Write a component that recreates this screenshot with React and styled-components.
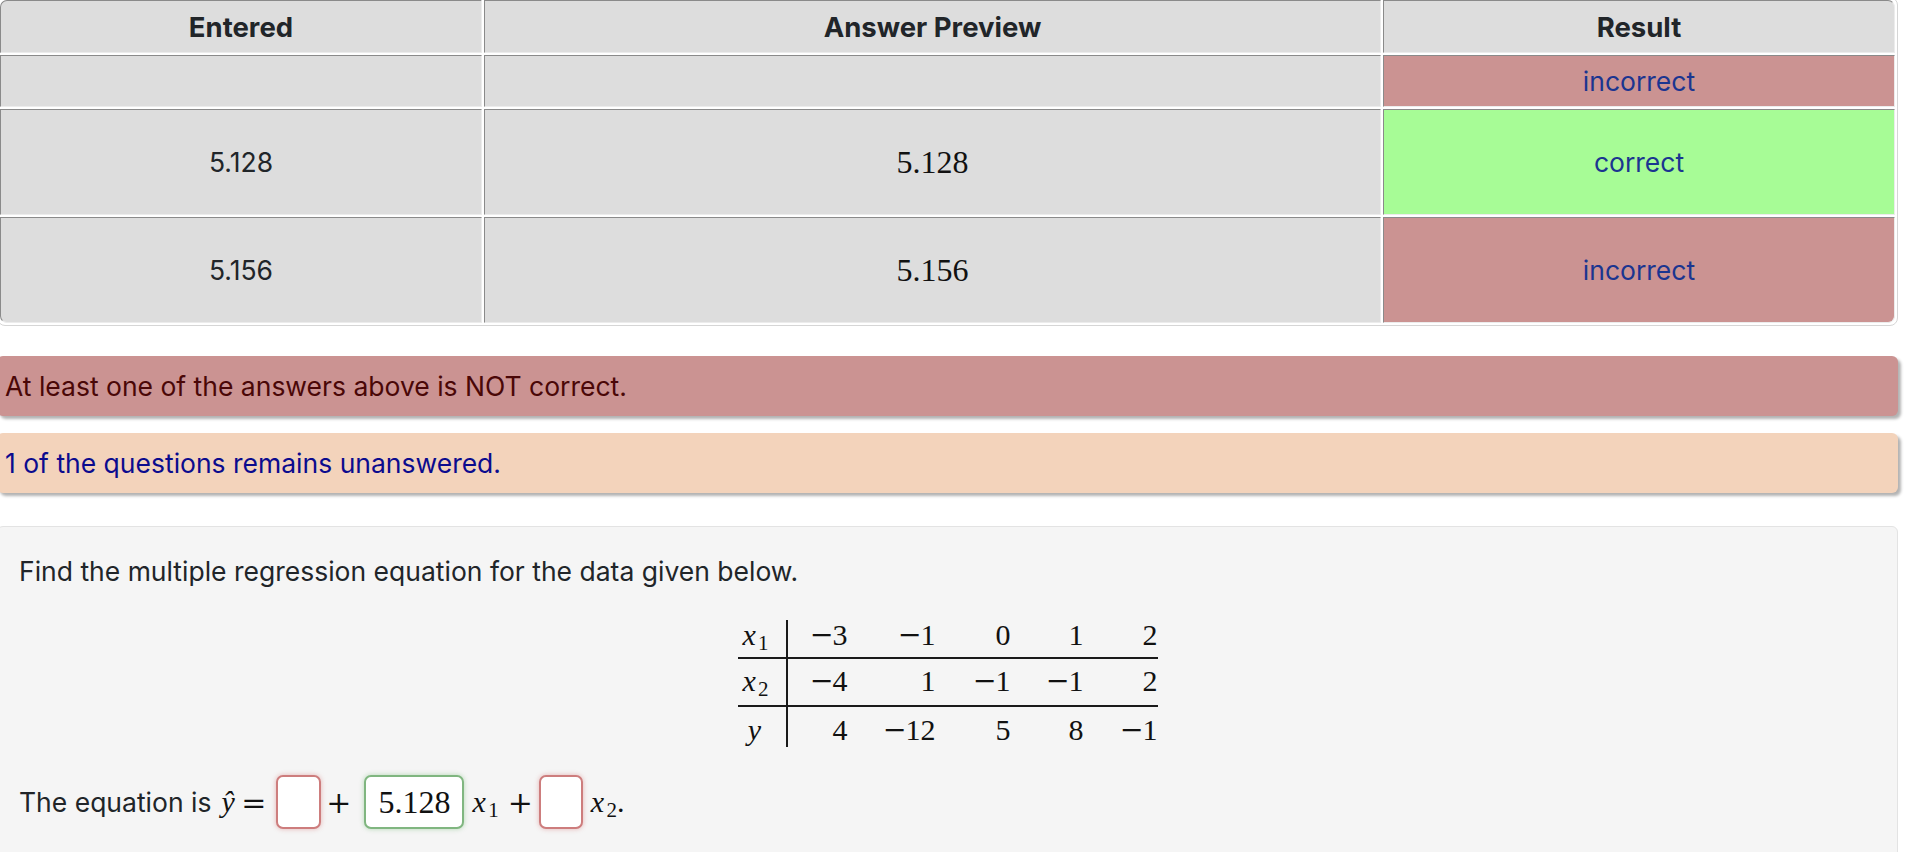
import React from 'react';
import styled, { createGlobalStyle } from 'styled-components';

const GlobalStyle = createGlobalStyle`
  html, body {
    margin: 0;
    padding: 0;
    background: #fff;
  }
  body {
    font-family: Inter, "Liberation Sans", Arial, sans-serif;
    font-size: 26.5px;
    color: #212529;
    overflow: hidden;
  }
`;

const serif = `"Liberation Serif", "Times New Roman", serif`;

const Page = styled.div`
  width: 1901px;
  margin: -3px 0 0 -3px;
`;

const ResultsTable = styled.table`
  width: 1901px;
  table-layout: fixed;
  border-collapse: separate;
  border-spacing: 2px;
  border: 1px solid #d6d6d6;
  border-radius: 8px;
  background: #fff;
`;

const Col = styled.col`
  width: ${({ $w }) => $w}px;
`;

const cellBase = `
  box-sizing: border-box;
  padding: 0;
  border-style: solid;
  border-width: 1px;
  border-color: #8a8a8a #ececec #ececec #8a8a8a;
  background: #dddddd;
  text-align: center;
  vertical-align: middle;
`;

const HeadCell = styled.th`
  ${cellBase}
  height: 53px;
  font-size: 27.5px;
  font-weight: 700;
  color: #212529;
  &:first-child { border-top-left-radius: 7px; }
  &:last-child { border-top-right-radius: 7px; }
`;

const statusBg = {
  correct: '#a7fc96',
  incorrect: '#cb9392',
};

const Cell = styled.td`
  ${cellBase}
  height: ${({ $h }) => $h}px;
  ${({ $status }) => $status && `background: ${statusBg[$status]}; color: #1b3590;`}
  ${({ $math }) => $math && `font-family: ${serif}; font-size: 32px; color: #111;`}
  tr:last-child > &:first-child { border-bottom-left-radius: 7px; }
  tr:last-child > &:last-child { border-bottom-right-radius: 7px; }
`;

const Alert = styled.div`
  box-sizing: border-box;
  margin-top: ${({ $gap }) => $gap}px;
  height: 60px;
  display: flex;
  align-items: center;
  padding: 0 8px;
  border-radius: 6px;
  box-shadow: 3px 3px 3px rgba(0, 0, 0, 0.3);
  background: ${({ $tone }) => ($tone === 'danger' ? '#cb9392' : '#f3d3bb')};
  color: ${({ $tone }) => ($tone === 'danger' ? '#4a0707' : '#0b0b8e')};
`;

const ProblemBox = styled.div`
  margin-top: 33px;
  min-height: 420px;
  background: #f5f5f5;
  border: 1px solid #e3e3e3;
  border-radius: 6px;
  padding: 26px 21px 40px 21px;
`;

const Text = styled.div`
  line-height: 36px;
`;

const MathCenter = styled.div`
  display: flex;
  justify-content: center;
  margin-top: 31px;
`;

const MathTable = styled.div`
  width: 420px;
  font-family: ${serif};
  font-size: 30px;
  color: #111;
`;

const MathRow = styled.div`
  display: grid;
  grid-template-columns: 50px 60px 88px 75px 73px 74px;
  height: ${({ $h }) => $h}px;
  ${({ $rule }) => $rule && 'border-bottom: 2px solid #1a1a1a;'}
  box-sizing: border-box;
`;

const MathCell = styled.div`
  display: flex;
  align-items: flex-end;
  justify-content: flex-end;
  padding-bottom: ${({ $pb }) => $pb}px;
  line-height: 30px;
  white-space: nowrap;
`;

const LabelCell = styled(MathCell)`
  justify-content: center;
  padding-right: 12px;
  border-right: 2px solid #1a1a1a;
`;

const Var = styled.span`
  font-style: italic;
  letter-spacing: 0.08em;
`;

const Sub = styled.sub`
  font-style: normal;
  font-size: 0.7em;
  vertical-align: -0.25em;
  line-height: 0;
  letter-spacing: 0;
`;

const Minus = styled.span`
  display: inline-block;
  width: 0.8em;
  font-family: "DejaVu Serif", ${serif};
  font-size: 0.95em;
  text-align: left;
`;

const EqLine = styled.div`
  display: flex;
  align-items: center;
  height: 54px;
  margin-top: 28px;
`;

const MathInline = styled.span`
  font-family: ${({ $op }) => ($op ? `"DejaVu Serif", ${serif}` : serif)};
  font-size: 30px;
  color: #111;
  margin: 0 ${({ $mr }) => $mr || 0}px 0 ${({ $ml }) => $ml || 0}px;
  white-space: nowrap;
`;

const boxColors = {
  bad: { border: '#cd7d7d', glow: 'rgba(200, 60, 60, 0.35)' },
  good: { border: '#80b680', glow: 'rgba(60, 160, 60, 0.35)' },
};

const AnswerBox = styled.span`
  box-sizing: border-box;
  display: inline-flex;
  align-items: center;
  justify-content: center;
  width: ${({ $w }) => $w}px;
  height: 54px;
  background: #fff;
  border: 2px solid ${({ $state }) => boxColors[$state].border};
  border-radius: 7px;
  box-shadow: 0 0 5px ${({ $state }) => boxColors[$state].glow};
  font-family: ${serif};
  font-size: 32px;
  color: #111;
`;

const neg = (n) => (
  <>
    <Minus>−</Minus>
    {n}
  </>
);

const rows = [
  { label: <Var>x<Sub>1</Sub></Var>, vals: [neg(3), neg(1), '0', '1', '2'], h: 39, pb: 9, rule: true },
  { label: <Var>x<Sub>2</Sub></Var>, vals: [neg(4), '1', neg(1), neg(1), '2'], h: 48, pb: 9, rule: true },
  { label: <Var>y</Var>, vals: ['4', neg(12), '5', '8', neg(1)], h: 40, pb: 2, rule: false },
];

const attempts = [
  { entered: '', preview: '', status: 'incorrect', h: 52 },
  { entered: '5.128', preview: '5.128', status: 'correct', h: 106 },
  { entered: '5.156', preview: '5.156', status: 'incorrect', h: 106 },
];

export default function App() {
  return (
    <>
      <GlobalStyle />
      <Page>
        <ResultsTable>
          <colgroup>
            <Col $w={482} />
            <Col $w={897} />
            <Col $w={512} />
          </colgroup>
          <thead>
            <tr>
              <HeadCell>Entered</HeadCell>
              <HeadCell>Answer Preview</HeadCell>
              <HeadCell>Result</HeadCell>
            </tr>
          </thead>
          <tbody>
            {attempts.map((a, i) => (
              <tr key={i}>
                <Cell $h={a.h}>{a.entered}</Cell>
                <Cell $h={a.h} $math>{a.preview}</Cell>
                <Cell $h={a.h} $status={a.status}>{a.status}</Cell>
              </tr>
            ))}
          </tbody>
        </ResultsTable>

        <Alert $tone="danger" $gap={30}>At least one of the answers above is NOT correct.</Alert>
        <Alert $tone="warning" $gap={17}>1 of the questions remains unanswered.</Alert>

        <ProblemBox>
          <Text>Find the multiple regression equation for the data given below.</Text>
          <MathCenter>
            <MathTable>
              {rows.map((r, i) => (
                <MathRow key={i} $h={r.h} $rule={r.rule}>
                  <LabelCell $pb={r.pb}>{r.label}</LabelCell>
                  {r.vals.map((v, j) => (
                    <MathCell key={j} $pb={r.pb}>{v}</MathCell>
                  ))}
                </MathRow>
              ))}
            </MathTable>
          </MathCenter>
          <EqLine>
            <span>The equation is</span>
            <MathInline $ml={10}><Var>ŷ</Var></MathInline>
            <MathInline $op $ml={4} $mr={10}>=</MathInline>
            <AnswerBox $w={45} $state="bad" />
            <MathInline $op $ml={5} $mr={13}>+</MathInline>
            <AnswerBox $w={100} $state="good">5.128</AnswerBox>
            <MathInline $ml={8} $mr={9}><Var>x<Sub>1</Sub></Var></MathInline>
            <MathInline $op $mr={6}>+</MathInline>
            <AnswerBox $w={44} $state="bad" />
            <MathInline $ml={8}><Var>x<Sub>2</Sub></Var>.</MathInline>
          </EqLine>
        </ProblemBox>
      </Page>
    </>
  );
}
